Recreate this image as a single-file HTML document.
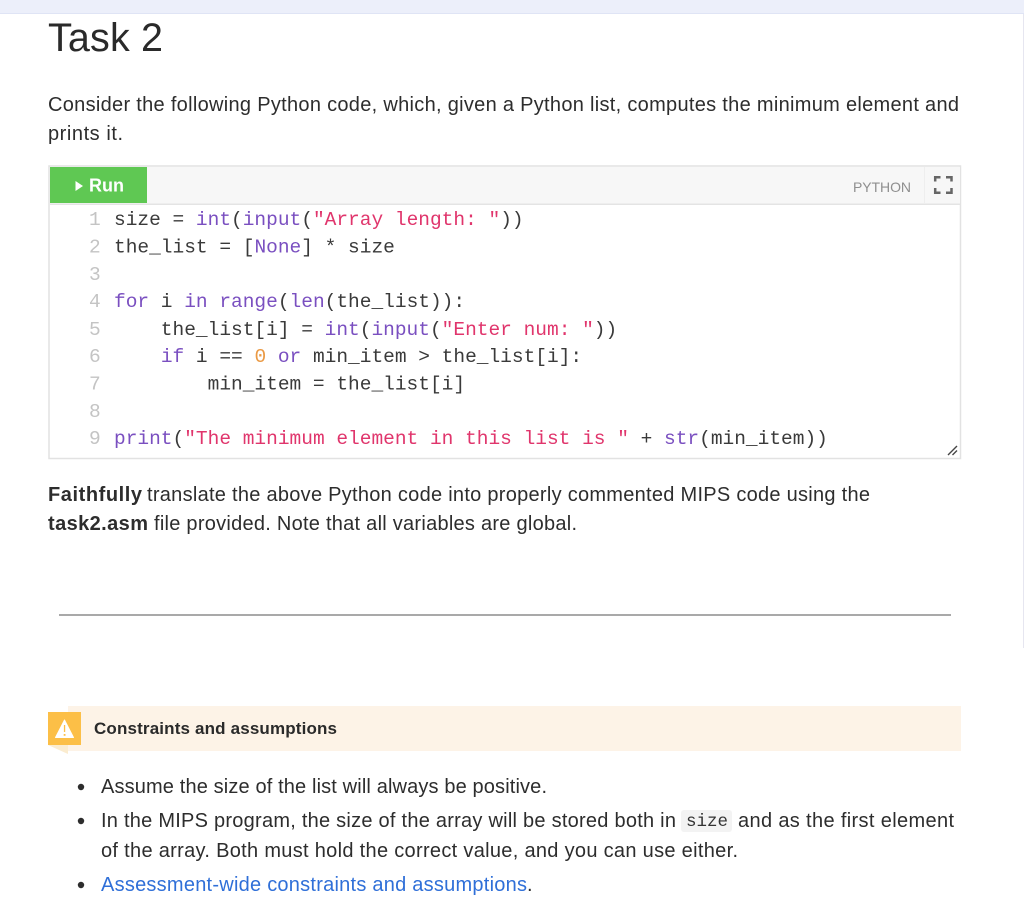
<!DOCTYPE html>
<html><head><meta charset="utf-8"><title>Task 2</title>
<style>
html,body{margin:0;padding:0;background:#fff;width:1024px;height:909px;overflow:hidden}
svg{display:block}
text{white-space:pre}
.s{font-family:"Liberation Sans",sans-serif;font-size:20px;fill:#2d2d2d}
.b{font-family:"Liberation Sans",sans-serif;font-size:20px;font-weight:bold;fill:#2d2d2d}
.m{font-family:"Liberation Mono",monospace;font-size:19.5px;fill:#3a3a3a}
.n{font-family:"Liberation Mono",monospace;font-size:19.5px;fill:#c4c4c4}
.k{fill:#7a4fc0}.t{fill:#e0356c}.o{fill:#ea9a45}
</style></head><body>
<svg width="1024" height="909" viewBox="0 0 1024 909" xmlns="http://www.w3.org/2000/svg">
<rect x="0" y="0" width="1024" height="13" fill="#eceffa"/>
<rect x="0" y="13" width="1024" height="1" fill="#dfe4f5"/>
<rect x="1023" y="14" width="1" height="634" fill="#e6e6f0"/>

<text x="48" y="51" font-family="Liberation Sans" font-size="39.500" fill="#2a2a2a" textLength="115" lengthAdjust="spacing">Task 2</text>
<text class="s" x="48" y="111" textLength="911" lengthAdjust="spacing">Consider the following Python code, which, given a Python list, computes the minimum element and</text>
<text class="s" x="48" y="140" textLength="75" lengthAdjust="spacing">prints it.</text>

<rect x="49" y="166" width="911.500" height="292.500" fill="#fff" stroke="#e2e2e2" stroke-width="1.500"/>
<rect x="50" y="167" width="910" height="37" fill="#f7f7f7"/>
<rect x="50" y="203.500" width="910" height="1.500" fill="#e4e4e4"/>
<rect x="50" y="167" width="97" height="36" fill="#5fc853"/>
<path d="M75.500 181L83 186L75.500 191Z" fill="#fff"/>
<text x="89" y="191.500" font-family="Liberation Sans" font-weight="bold" font-size="18" fill="#fff" textLength="35" lengthAdjust="spacing">Run</text>
<text x="853" y="192" font-family="Liberation Sans" font-size="14" fill="#8f8f8f" textLength="58" lengthAdjust="spacing">PYTHON</text>
<rect x="924" y="167" width="1" height="36" fill="#eeeeee"/>
<path d="M935.200 181.500V177.200H940.500M946 177.200H951.500V181.500M935.200 188V192.800H940.500M946 192.800H951.500V188" fill="none" stroke="#666" stroke-width="2.500"/>

<text class="n" x="89" y="225">1</text>
<text class="n" x="89" y="252.500">2</text>
<text class="n" x="89" y="280">3</text>
<text class="n" x="89" y="307">4</text>
<text class="n" x="89" y="335">5</text>
<text class="n" x="89" y="362">6</text>
<text class="n" x="89" y="389.500">7</text>
<text class="n" x="89" y="417">8</text>
<text class="n" x="89" y="444">9</text>

<text class="m" x="114" y="225">size = <tspan class="k">int</tspan>(<tspan class="k">input</tspan>(<tspan class="t">"Array length: "</tspan>))</text>
<text class="m" x="114" y="252.500">the_list = [<tspan class="k">None</tspan>] * size</text>
<text class="m" x="114" y="307"><tspan class="k">for</tspan> i <tspan class="k">in</tspan> <tspan class="k">range</tspan>(<tspan class="k">len</tspan>(the_list)):</text>
<text class="m" x="114" y="335">    the_list[i] = <tspan class="k">int</tspan>(<tspan class="k">input</tspan>(<tspan class="t">"Enter num: "</tspan>))</text>
<text class="m" x="114" y="362">    <tspan class="k">if</tspan> i == <tspan class="o">0</tspan> <tspan class="k">or</tspan> min_item &gt; the_list[i]:</text>
<text class="m" x="114" y="389.500">        min_item = the_list[i]</text>
<text class="m" x="114" y="444"><tspan class="k">print</tspan>(<tspan class="t">"The minimum element in this list is "</tspan> + <tspan class="k">str</tspan>(min_item))</text>

<path d="M948 455L957 446M952.500 455L957 450.500" stroke="#444" stroke-width="1.400" fill="none"/>

<text class="b" x="48" y="501" textLength="94" lengthAdjust="spacing">Faithfully</text>
<text class="s" x="147" y="501" textLength="723" lengthAdjust="spacing">translate the above Python code into properly commented MIPS code using the</text>
<text class="b" x="48" y="530" textLength="100" lengthAdjust="spacing">task2.asm</text>
<text class="s" x="154" y="530" textLength="423" lengthAdjust="spacing">file provided. Note that all variables are global.</text>

<rect x="59" y="614" width="892" height="2" fill="#a9a9a9"/>

<rect x="68" y="706" width="893" height="45" fill="#fdf3e7"/>
<path d="M48 745H68V754Z" fill="#fbeccf"/>
<rect x="48" y="712" width="33" height="33" fill="#fcbf47"/>
<path d="M64.500 720L73.500 737.500H55.500Z" fill="#fff" stroke="#fff" stroke-width="1" stroke-linejoin="round"/>
<rect x="63.900" y="725" width="1.300" height="7" fill="#fcbf47"/>
<rect x="63.700" y="734" width="1.800" height="1.800" fill="#fcbf47"/>
<text x="94" y="734" font-family="Liberation Sans" font-weight="bold" font-size="17" fill="#2a2a2a" textLength="243" lengthAdjust="spacing">Constraints and assumptions</text>

<circle cx="81" cy="787" r="3.200" fill="#2d2d2d"/>
<circle cx="81" cy="821" r="3.200" fill="#2d2d2d"/>
<circle cx="81" cy="885" r="3.200" fill="#2d2d2d"/>
<text class="s" x="101" y="793" textLength="446" lengthAdjust="spacing">Assume the size of the list will always be positive.</text>
<text class="s" x="101" y="827" textLength="575" lengthAdjust="spacing">In the MIPS program, the size of the array will be stored both in</text>
<rect x="681" y="810" width="51" height="22" rx="3" fill="#f3f3f3"/>
<text x="686" y="826" font-family="Liberation Mono" font-size="17.500" fill="#333">size</text>
<text class="s" x="738" y="827" textLength="216" lengthAdjust="spacing">and as the first element</text>
<text class="s" x="101" y="857" textLength="637" lengthAdjust="spacing">of the array. Both must hold the correct value, and you can use either.</text>
<text class="s" x="101" y="891" style="fill:#2f6fd8" textLength="426" lengthAdjust="spacing">Assessment-wide constraints and assumptions</text>
<text class="s" x="527" y="891">.</text>
</svg>
</body></html>
